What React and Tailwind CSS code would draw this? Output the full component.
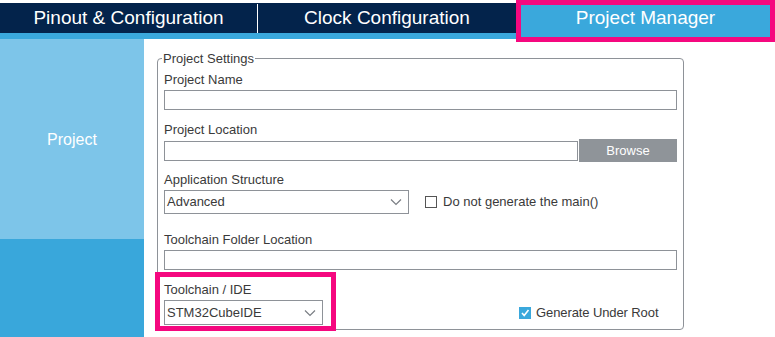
import React from "react";

const Chevron = () => (
  <svg width="12" height="8" viewBox="0 0 12 8" className="shrink-0">
    <polyline points="1,1.5 6,6.5 11,1.5" fill="none" stroke="#7a7e84" strokeWidth="1.2" />
  </svg>
);

const Label = ({ children, className = "" }) => (
  <div className={`h-[16px] text-[13px] leading-[16px] text-[#3a3a3a] ${className}`}>{children}</div>
);

export default function App() {
  return (
    <div className="relative h-[337px] w-[775px] overflow-hidden bg-white font-['Liberation_Sans',Arial,sans-serif]">
      {/* tabs */}
      <div className="pt-[3px]">
        <div className="flex h-[30px] bg-[#03234b] pt-[1px] text-[19px] text-white">
          <div className="flex w-[258px] items-center justify-center border-r border-white">Pinout &amp; Configuration</div>
          <div className="flex w-[258px] items-center justify-center">Clock Configuration</div>
          <div className="flex flex-1 items-center justify-center bg-[#3aa8dc]">Project Manager</div>
        </div>
        <div className="h-[6px] bg-[#3aa8dc]" />
      </div>

      <div className="flex h-[298px]">
        <div className="flex w-[144px] flex-col">
          <div className="flex h-[200px] items-center justify-center bg-[#7dc5e9] pt-[2px] text-[16px] text-white">Project</div>
          <div className="flex-1 bg-[#39a7db]" />
        </div>

        <div className="pl-[13px] pt-[12px]">
          <fieldset className="h-[279px] w-[527px] rounded-[4px] border border-[#8e9298] px-[6px]">
            <legend className="ml-[-2px] px-[1px] text-[13px] leading-[15px] text-[#3a3a3a]">Project Settings</legend>

            <Label className="mt-[6px]">Project Name</Label>
            <div className="mt-[2px] h-[20px] border border-[#8e9298]" />

            <Label className="mt-[12px]">Project Location</Label>
            <div className="mt-[1px] flex h-[23px] items-center gap-[1px]">
              <div className="h-[20px] flex-1 border border-[#8e9298]" />
              <div className="flex h-[23px] w-[98px] items-center justify-center bg-[#8f9499] text-[13px] text-white">Browse</div>
            </div>

            <Label className="mt-[10px]">Application Structure</Label>
            <div className="mt-[2px] flex items-center">
              <div className="flex h-[24px] w-[245px] items-center justify-between border border-[#8e9298] pl-[2px] pr-[6px] text-[13px] text-[#3a3a3a]">
                Advanced
                <Chevron />
              </div>
              <div className="ml-[16px] h-[12px] w-[12px] border border-[#555]" />
              <span className="ml-[6px] text-[13px] text-[#3a3a3a]">Do not generate the main()</span>
            </div>

            <Label className="mt-[18px]">Toolchain Folder Location</Label>
            <div className="mt-[2px] h-[20px] border border-[#8e9298]" />

            <Label className="mt-[12px]">Toolchain / IDE</Label>
            <div className="mt-[2px] flex items-center">
              <div className="flex h-[25px] w-[159px] items-center justify-between border border-[#8e9298] pl-[2px] pr-[6px] text-[13px] text-[#3a3a3a]">
                STM32CubeIDE
                <Chevron />
              </div>
              <div className="ml-[196px] flex h-[12px] w-[12px] items-center justify-center bg-[#3aa8dc]">
                <svg width="10" height="10" viewBox="0 0 10 10">
                  <polyline points="2,5 4.2,7.5 8.5,2" fill="none" stroke="white" strokeWidth="1.6" />
                </svg>
              </div>
              <span className="ml-[5px] text-[13px] tracking-[-0.1px] text-[#3a3a3a]">Generate Under Root</span>
            </div>
          </fieldset>
        </div>
      </div>

      {/* highlight annotations */}
      <div className="absolute left-[516px] top-0 h-[42px] w-[259px] border-[5px] border-[#f5087f]" />
      <div className="absolute left-[155px] top-[272px] h-[59px] w-[181px] border-[5px] border-[#f5087f]" />
    </div>
  );
}
